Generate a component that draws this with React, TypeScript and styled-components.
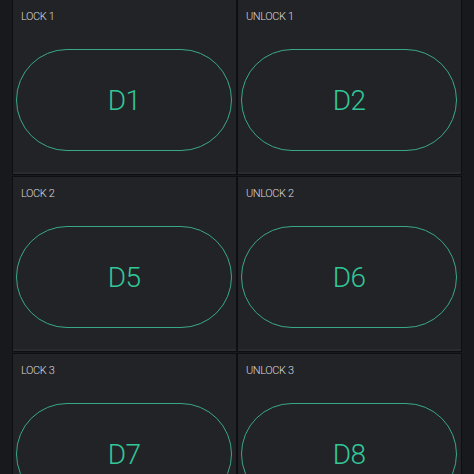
import { FC } from "react";
import styled, { createGlobalStyle } from "styled-components";

const GlobalStyle = createGlobalStyle`
  html, body {
    margin: 0;
    padding: 0;
    background: #18191d;
    overflow: hidden;
  }
`;

const Board = styled.div`
  display: grid;
  grid-template-columns: 223px 223px;
  grid-auto-rows: 174px;
  column-gap: 2px;
  row-gap: 3px;
  padding: 0 13px;
  width: 474px;
  box-sizing: border-box;
  background: #18191d;
`;

const Cell = styled.div`
  background: #222327;
  border-bottom: 2px solid #2a2b2f;
  box-sizing: border-box;
  display: flex;
  flex-direction: column;
  padding-top: 11px;
  outline: 1px solid #0e0f12;
`;

const Label = styled.div`
  font-family: "Roboto", "Liberation Sans", sans-serif;
  font-size: 11px;
  font-weight: 300;
  letter-spacing: -0.4px;
  color: #d8d9db;
  line-height: 12px;
  padding-left: 8px;
  text-transform: uppercase;
`;

const Pill = styled.div`
  margin: 26px 0 0 3px;
  width: 216px;
  height: 102px;
  box-sizing: border-box;
  border: 1.5px solid #3aa886;
  border-radius: 51px;
  display: flex;
  align-items: center;
  justify-content: center;
  font-family: "Roboto", "Liberation Sans", sans-serif;
  font-weight: 300;
  font-size: 28px;
  color: #31c798;
  letter-spacing: -0.8px;
`;

interface ButtonProps {
  label: string;
  pin: string;
}

const PinButton: FC<ButtonProps> = ({ label, pin }) => (
  <Cell>
    <Label>{label}</Label>
    <Pill>{pin}</Pill>
  </Cell>
);

const buttons = [
  { label: "Lock 1", pin: "D1" },
  { label: "Unlock 1", pin: "D2" },
  { label: "Lock 2", pin: "D5" },
  { label: "Unlock 2", pin: "D6" },
  { label: "Lock 3", pin: "D7" },
  { label: "Unlock 3", pin: "D8" },
];

const App: FC = () => (
  <>
    <GlobalStyle />
    <Board>
      {buttons.map((b) => (
        <PinButton key={b.pin} label={b.label} pin={b.pin} />
      ))}
    </Board>
  </>
);

export default App;
